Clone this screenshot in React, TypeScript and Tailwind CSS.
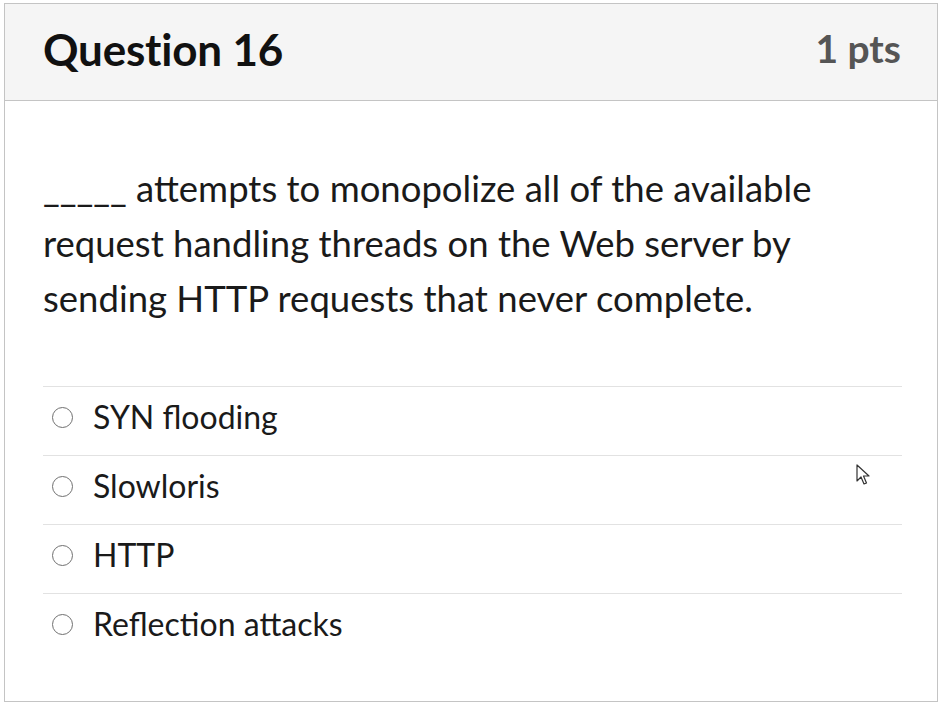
import React from "react";

const options = ["SYN flooding", "Slowloris", "HTTP", "Reflection attacks"];

export default function App() {
  return (
    <div className="w-[939px] h-[706px] bg-white relative" style={{ fontFamily: "Lato, 'Open Sans', sans-serif" }}>
      <div className="absolute left-[4px] top-[3px] w-[934px] h-[699px] border border-[#c4c4c4] flex flex-col">
        <div className="h-[97px] bg-[#f5f5f5] border-b border-[#c4c4c4] flex items-center justify-between pl-[38px] pr-[36px] pb-[7px] shrink-0">
          <div className="text-[44px] font-bold text-[#111] tracking-[-0.2px]">Question 16</div>
          <div className="text-[39px] font-bold text-[#555]">1 pts</div>
        </div>
        <div className="px-[38px] pt-[60px]">
          <p className="text-[36.5px] leading-[55px] text-[#1a1a1a] w-[830px]">
            _____ attempts to monopolize all of the available request handling threads on the Web server by sending HTTP requests that never complete.
          </p>
          <div className="mt-[60px] mr-[-3px]">
            {options.map((o) => (
              <div key={o} className="h-[69px] flex items-center border-t border-[#e2e2e2] pb-[8px]">
                <div className="w-[21px] h-[21px] rounded-full border-[1.5px] border-[#707070] ml-[9px]" />
                <div className="ml-[20px] text-[32px] text-[#1a1a1a]">{o}</div>
              </div>
            ))}
          </div>
        </div>
      </div>
      <svg className="absolute left-[856px] top-[464px]" width="16" height="24" viewBox="0 0 16 24">
        <path d="M1 1 L1 17 L5 13 L8 20 L10.5 19 L7.5 12 L13 12 Z" fill="white" stroke="#333" strokeWidth="1.2" strokeLinejoin="round" />
      </svg>
    </div>
  );
}
